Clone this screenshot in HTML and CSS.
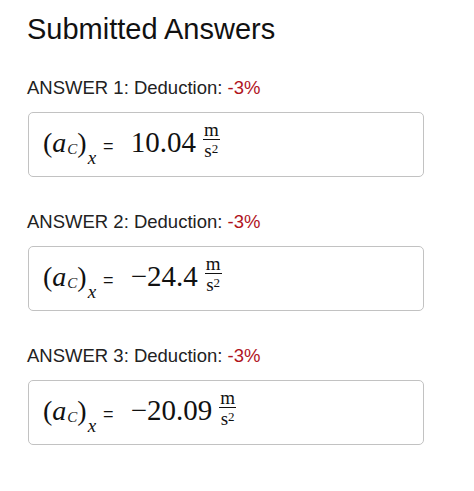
FILE: index.html
```html
<!DOCTYPE html>
<html>
<head>
<meta charset="utf-8">
<link rel="stylesheet" href="styles.css">
</head>
<body>
<div class="page">
  <h2 class="title">Submitted Answers</h2>

  <div class="answer">
    <div class="label">ANSWER 1: Deduction: <span class="ded">-3%</span></div>
    <div class="box">
      <span class="var">(<i>a</i><sub class="subc"><i>C</i></sub>)<sub class="subx"><i>x</i></sub></span>
      <span class="eq">=</span>
      <span class="num">10.04</span>
      <span class="frac"><span class="fn">m</span><span class="fd">s<sup>2</sup></span></span>
    </div>
  </div>

  <div class="answer">
    <div class="label">ANSWER 2: Deduction: <span class="ded">-3%</span></div>
    <div class="box">
      <span class="var">(<i>a</i><sub class="subc"><i>C</i></sub>)<sub class="subx"><i>x</i></sub></span>
      <span class="eq">=</span>
      <span class="num">−24.4</span>
      <span class="frac"><span class="fn">m</span><span class="fd">s<sup>2</sup></span></span>
    </div>
  </div>

  <div class="answer">
    <div class="label">ANSWER 3: Deduction: <span class="ded">-3%</span></div>
    <div class="box">
      <span class="var">(<i>a</i><sub class="subc"><i>C</i></sub>)<sub class="subx"><i>x</i></sub></span>
      <span class="eq">=</span>
      <span class="num">−20.09</span>
      <span class="frac"><span class="fn">m</span><span class="fd">s<sup>2</sup></span></span>
    </div>
  </div>
</div>
</body>
</html>
```

FILE: styles.css
```css
html, body {
  margin: 0;
  padding: 0;
  background: #ffffff;
}

.page {
  padding: 12px 0 0 27px;
  font-family: "Liberation Sans", Arial, sans-serif;
  color: #1a1a1a;
}

.title {
  margin: 0;
  font-size: 29px;
  font-weight: normal;
  line-height: 34px;
  color: #111;
}

.label {
  margin-top: 31px;
  font-size: 18.5px;
  line-height: 22px;
  color: #222;
}

.answer + .answer .label {
  margin-top: 34px;
}

.ded {
  color: #b0131e;
}

.box {
  margin-top: 13px;
  margin-left: 1px;
  box-sizing: border-box;
  width: 396px;
  height: 65px;
  border: 1px solid #c2c2c2;
  border-radius: 5px;
  display: flex;
  align-items: baseline;
  padding-left: 14px;
  padding-top: 15px;
  line-height: 1;
  font-family: "Liberation Serif", "Times New Roman", serif;
  color: #111;
}

.var {
  font-size: 28px;
}

.var i {
  font-style: italic;
}

.subc {
  font-size: 15px;
  vertical-align: -2px;
  margin-left: 1px;
}

.subx {
  font-size: 19px;
  vertical-align: -12px;
  margin-left: 1px;
}

.eq {
  font-family: "Liberation Sans", Arial, sans-serif;
  font-size: 18px;
  margin-left: 7px;
  margin-right: 17px;
}

.num {
  font-size: 29px;
}

.frac {
  display: inline-flex;
  flex-direction: column;
  align-items: center;
  align-self: flex-start;
  font-size: 19px;
  margin-left: 7px;
  margin-top: -7px;
}

.fn {
  display: block;
  line-height: 17px;
  padding: 0 1px 1px;
  border-bottom: 1px solid #111;
}

.fd {
  display: block;
  line-height: 17px;
  padding-top: 2px;
}

.fd sup {
  font-size: 13px;
  vertical-align: 4px;
  line-height: 0;
}
```
